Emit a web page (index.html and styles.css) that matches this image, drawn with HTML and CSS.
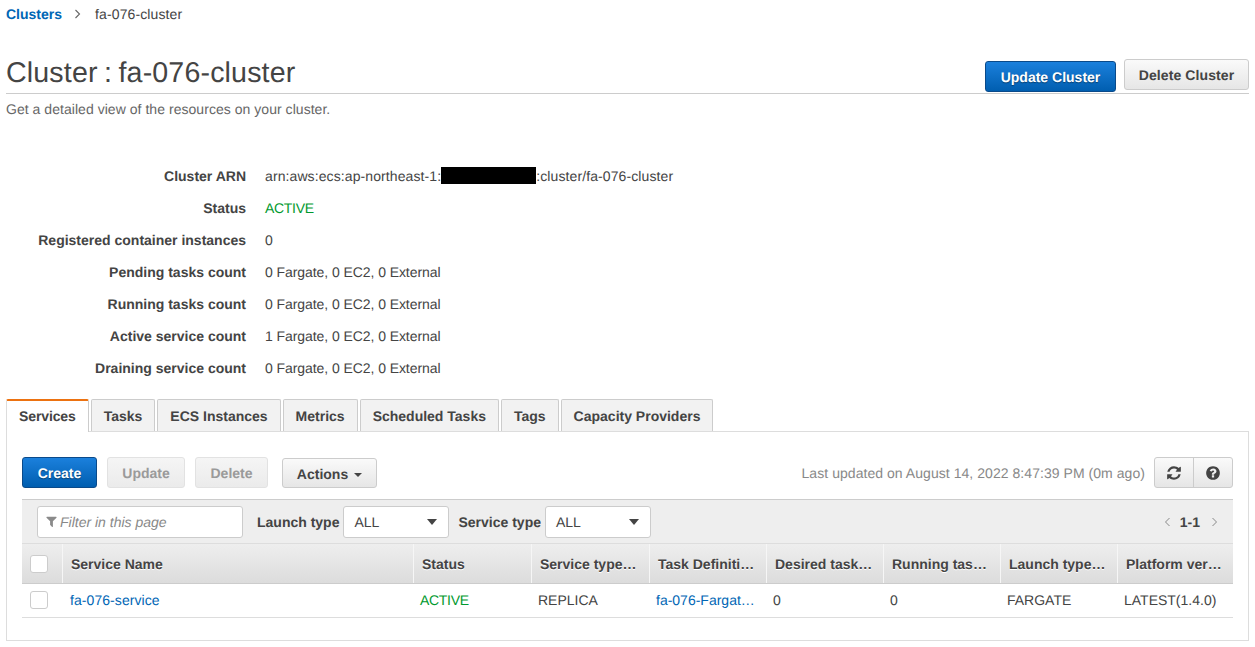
FILE: index.html
```html
<!DOCTYPE html>
<html lang="en">
<head>
<meta charset="utf-8">
<title>Cluster : fa-076-cluster</title>
<link rel="stylesheet" href="styles.css">
</head>
<body>
<nav class="crumbs"><a class="crumb-link" href="#">Clusters</a><span class="crumb-sep"><svg width="7" height="10" viewBox="0 0 7 10"><path d="M1.500 1l4 4-4 4" fill="none" stroke="#666" stroke-width="1.100"/></svg></span><span class="crumb-current">fa-076-cluster</span></nav>
<header class="head">
  <h1 class="title">Cluster : fa-076-cluster</h1>
  <div class="head-actions">
    <button class="btn btn-primary btn-update">Update Cluster</button>
    <button class="btn btn-delete">Delete Cluster</button>
  </div>
</header>
<p class="desc">Get a detailed view of the resources on your cluster.</p>
<dl class="details">
  <div class="row"><dt>Cluster ARN</dt><dd class="arn">arn:aws:ecs:ap-northeast-1:<span class="redact"></span>:cluster/fa-076-cluster</dd></div>
  <div class="row"><dt>Status</dt><dd class="green">ACTIVE</dd></div>
  <div class="row"><dt>Registered container instances</dt><dd>0</dd></div>
  <div class="row"><dt>Pending tasks count</dt><dd class="count">0 Fargate, 0 EC2, 0 External</dd></div>
  <div class="row"><dt>Running tasks count</dt><dd class="count">0 Fargate, 0 EC2, 0 External</dd></div>
  <div class="row"><dt>Active service count</dt><dd class="count">1 Fargate, 0 EC2, 0 External</dd></div>
  <div class="row"><dt>Draining service count</dt><dd class="count">0 Fargate, 0 EC2, 0 External</dd></div>
</dl>
<div class="tabs">
  <div class="tab tab-active">Services</div>
  <div class="tab">Tasks</div>
  <div class="tab">ECS Instances</div>
  <div class="tab">Metrics</div>
  <div class="tab">Scheduled Tasks</div>
  <div class="tab">Tags</div>
  <div class="tab">Capacity Providers</div>
</div>
<section class="panel">
  <div class="toolbar">
    <button class="btn btn-primary btn-create">Create</button>
    <button class="btn btn-disabled btn-up">Update</button>
    <button class="btn btn-disabled btn-del">Delete</button>
    <button class="btn btn-actions">Actions<span class="caret"></span></button>
    <span class="updated">Last updated on August 14, 2022 8:47:39 PM (0m ago)</span>
    <div class="icon-group">
      <button class="icon-btn"><svg width="16" height="16" viewBox="0 0 1792 1792"><path fill="#444" d="M1639 1056q0 5-1 7-64 268-268 434.500t-478 166.500q-146 0-282.500-55t-243.500-157l-129 129q-19 19-45 19t-45-19-19-45v-448q0-26 19-45t45-19h448q26 0 45 19t19 45-19 45l-137 137q71 66 161 102t187 36q134 0 250-65t186-179q11-17 53-117 8-23 30-23h192q13 0 22.500 9.500t9.500 22.500zm25-800v448q0 26-19 45t-45 19h-448q-26 0-45-19t-19-45 19-45l138-138q-148-137-349-137-134 0-250 65t-186 179q-11 17-53 117-8 23-30 23h-199q-13 0-22.500-9.500t-9.500-22.500v-7q65-268 270-434.500t480-166.500q146 0 284 55.500t245 156.500l130-129q19-19 45-19t45 19 19 45z"/></svg></button>
      <button class="icon-btn"><svg width="16" height="16" viewBox="0 0 1792 1792"><path fill="#444" d="M1024 1376v-192q0-14-9-23t-23-9h-192q-14 0-23 9t-9 23v192q0 14 9 23t23 9h192q14 0 23-9t9-23zm256-672q0-88-55.500-163t-138.500-116-170-41q-243 0-371 213-15 24 8 42l132 100q7 6 19 6 16 0 25-12 53-68 86-92 34-24 86-24 48 0 85.500 26t37.500 59q0 38-20 61t-68 45q-63 28-115.500 86.500t-52.500 125.500v36q0 14 9 23t23 9h192q14 0 23-9t9-23q0-19 21.500-49.500t54.500-49.500q32-18 49-28.500t46-35 44.500-48 28-60.500 12.500-81zm384 192q0 209-103 385.500t-279.500 279.500-385.500 103-385.500-103-279.500-279.500-103-385.500 103-385.500 279.500-279.500 385.500-103 385.500 103 279.500 279.500 103 385.500z"/></svg></button>
    </div>
  </div>
  <div class="filterbar">
    <div class="filter"><svg class="funnel" width="13" height="13" viewBox="0 0 1792 1792"><path fill="#8a8a8a" d="M1595 295q17 41-14 70l-493 493v742q0 42-39 59-13 5-25 5-27 0-45-19l-256-256q-19-19-19-45v-486l-493-493q-31-29-14-70 17-39 59-39h1280q42 0 59 39z"/></svg><span>Filter in this page</span></div>
    <label class="flabel">Launch type</label>
    <div class="select"><span>ALL</span><span class="sel-caret"></span></div>
    <label class="flabel">Service type</label>
    <div class="select"><span>ALL</span><span class="sel-caret"></span></div>
    <div class="pager"><svg width="7" height="10" viewBox="0 0 7 10"><path d="M5.500 1l-4 4 4 4" fill="none" stroke="#888" stroke-width="1"/></svg><b class="pager-range">1-1</b><svg width="7" height="10" viewBox="0 0 7 10"><path d="M1.500 1l4 4-4 4" fill="none" stroke="#888" stroke-width="1"/></svg></div>
  </div>
  <div class="tbl">
    <div class="thead">
      <div class="th th-check"><span class="check"></span></div>
      <div class="th">Service Name</div>
      <div class="th">Status</div>
      <div class="th">Service type…</div>
      <div class="th">Task Definiti…</div>
      <div class="th">Desired task…</div>
      <div class="th">Running tas…</div>
      <div class="th">Launch type…</div>
      <div class="th">Platform ver…</div>
    </div>
    <div class="tbody">
      <div class="td td-check"><span class="check"></span></div>
      <div class="td td-name"><a href="#">fa-076-service</a></div>
      <div class="td green">ACTIVE</div>
      <div class="td">REPLICA</div>
      <div class="td"><a href="#">fa-076-Fargat…</a></div>
      <div class="td">0</div>
      <div class="td">0</div>
      <div class="td">FARGATE</div>
      <div class="td">LATEST(1.4.0)</div>
    </div>
  </div>
</section>
</body>
</html>
```
FILE: styles.css
```css
* { box-sizing: border-box; }
html, body { margin: 0; padding: 0; }
body {
  padding: 0 6px;
  width: 1255px;
  height: 647px;
  overflow: hidden;
  background: #fff;
  color: #444;
  font-family: "Liberation Sans", Arial, sans-serif;
  font-size: 14px;
  line-height: 20px;
  text-rendering: geometricPrecision;
}
a { color: #0066b5; text-decoration: none; }
button { font-family: inherit; cursor: pointer; text-rendering: geometricPrecision; }

.crumbs { display: flex; align-items: center; height: 28px; color: #444; }
.crumb-link { font-weight: 700; }
.crumb-sep { display: flex; margin: 0 14px 0 12px; }
.crumb-current { letter-spacing: .12px; }

.head { display: flex; justify-content: space-between; align-items: flex-end; height: 66px; border-bottom: 1px solid #ccc; }
.title { margin: 0 0 3px; font-size: 28.6px; line-height: 34px; font-weight: 400; color: #444; letter-spacing: .15px; word-spacing: -1.7px; }
.head-actions { display: flex; align-items: flex-start; gap: 8px; margin-bottom: 1px; }

.btn { height: 31px; border-radius: 3px; font-size: 14px; font-weight: 700; padding: 0; border: 1px solid #ccc; }
.btn-primary { color: #fff; border-color: #0a4a8a; background: linear-gradient(#1b80dc, #005eb0); text-shadow: 0 1px 1px rgba(0,0,0,.4); }
.btn-update { width: 131px; }
.btn-delete { width: 125px; height: 31px; margin-top: -2px; color: #444; letter-spacing: .1px; background: linear-gradient(#fafafa, #e6e6e6); border-color: #ccc; }

.desc { margin: 5px 0 0; height: 20px; color: #666; letter-spacing: .04px; }

.details { margin: 41px 0 0; }
.row { display: flex; height: 32px; align-items: center; }
.row dt { width: 240px; text-align: right; font-weight: 700; color: #444; }
.row dd { margin: 0 0 0 19px; color: #444; }
.arn { letter-spacing: .1px; }
.count { letter-spacing: -.07px; }
.redact { display: inline-block; width: 95px; height: 17px; vertical-align: -3px; background: #000; }
.green { color: #00992e !important; letter-spacing: -.3px; }

.tabs { display: flex; gap: 2px; margin-top: 15px; height: 33px; position: relative; z-index: 1; }
.tab { height: 32px; padding: 0 12px; display: flex; align-items: center; font-weight: 700; color: #444; background: #f2f2f2; border: 1px solid #ccc; border-bottom: 0; border-radius: 2px 2px 0 0; }
.tab-active { height: 33px; padding-bottom: 2px; letter-spacing: -.12px; background: #fff; border-top: 2px solid #ec7211; border-right: 1px solid #ccc; border-left: 1px solid #ddd; }

.panel { width: 1243px; height: 210px; margin-top: -1px; border: 1px solid #ddd; padding: 0 15px; }

.toolbar { display: flex; align-items: flex-start; height: 67px; padding-top: 25px; }
.btn-create { width: 75px; }
.btn-disabled { color: #9a9a9a; background: linear-gradient(#f5f5f5, #ebebeb); border-color: #e2e2e2; }
.btn-up { width: 78px; margin-left: 10px; }
.btn-del { width: 73px; margin-left: 10px; }
.btn-actions { width: 95px; margin-left: 14px; height: 30px; margin-top: 1px; padding-top: 1px; color: #444; background: linear-gradient(#fafafa, #e6e6e6); }
.caret { display: inline-block; margin-left: 6px; vertical-align: 2px; border: 4px solid transparent; border-top-color: #444; border-bottom: 0; }
.updated { margin-left: auto; margin-right: 9px; height: 31px; line-height: 32px; color: #888; white-space: nowrap; letter-spacing: .05px; }
.icon-group { display: flex; width: 79px; height: 31px; border: 1px solid #ccc; border-radius: 3px; background: linear-gradient(#fafafa, #e6e6e6); }
.icon-btn { flex: 1; padding: 0; border: 0; background: none; display: flex; align-items: center; justify-content: center; }
.icon-btn + .icon-btn { border-left: 1px solid #ccc; }

.filterbar { display: flex; align-items: center; height: 44px; background: #eee; border-top: 1px solid #ccc; padding: 0 15px; }
.filter { width: 206px; height: 32px; display: flex; align-items: center; gap: 2px; padding-left: 7px; background: #fff; border: 1px solid #ccc; border-radius: 3px; color: #888; font-style: italic; }
.flabel { font-weight: 700; color: #444; white-space: nowrap; }
.filter + .flabel { margin-left: 14px; }
.select { width: 106px; height: 32px; margin-left: 4px; display: flex; align-items: center; justify-content: space-between; padding: 0 11px 0 10px; background: #fff; border: 1px solid #ccc; border-radius: 3px; color: #444; }
.select + .flabel { margin-left: 9px; }
.sel-caret { border: 5px solid transparent; border-top: 6px solid #444; border-bottom: 0; }
.pager { margin-left: auto; display: flex; align-items: center; gap: 10px; color: #444; }
.pager-range { margin: 0 1px 0 -1px; }

.thead, .tbody { display: grid; grid-template-columns: 40px 351px 118px 118px 117px 117px 117px 117px 116px; }
.thead { height: 41px; background: linear-gradient(#eee, #dcdcdc); border-top: 1px solid #ddd; border-bottom: 1px solid #ccc; }
.th { display: flex; align-items: center; padding-left: 8px; font-weight: 700; color: #444; text-shadow: 0 1px 0 #fff; border-left: 1px solid #f6f6f6; white-space: nowrap; }
.th-check { border-left: 0; }
.tbody { height: 34px; padding-bottom: 1px; border-bottom: 1px solid #ddd; }
.td { display: flex; align-items: center; padding-left: 7px; color: #444; white-space: nowrap; }
.td-check, .td-name { padding-left: 8px; }
.td-name { letter-spacing: .07px; }
.check { display: block; width: 18px; height: 18px; background: #fff; border: 1px solid #ccc; border-radius: 3px; }
```
